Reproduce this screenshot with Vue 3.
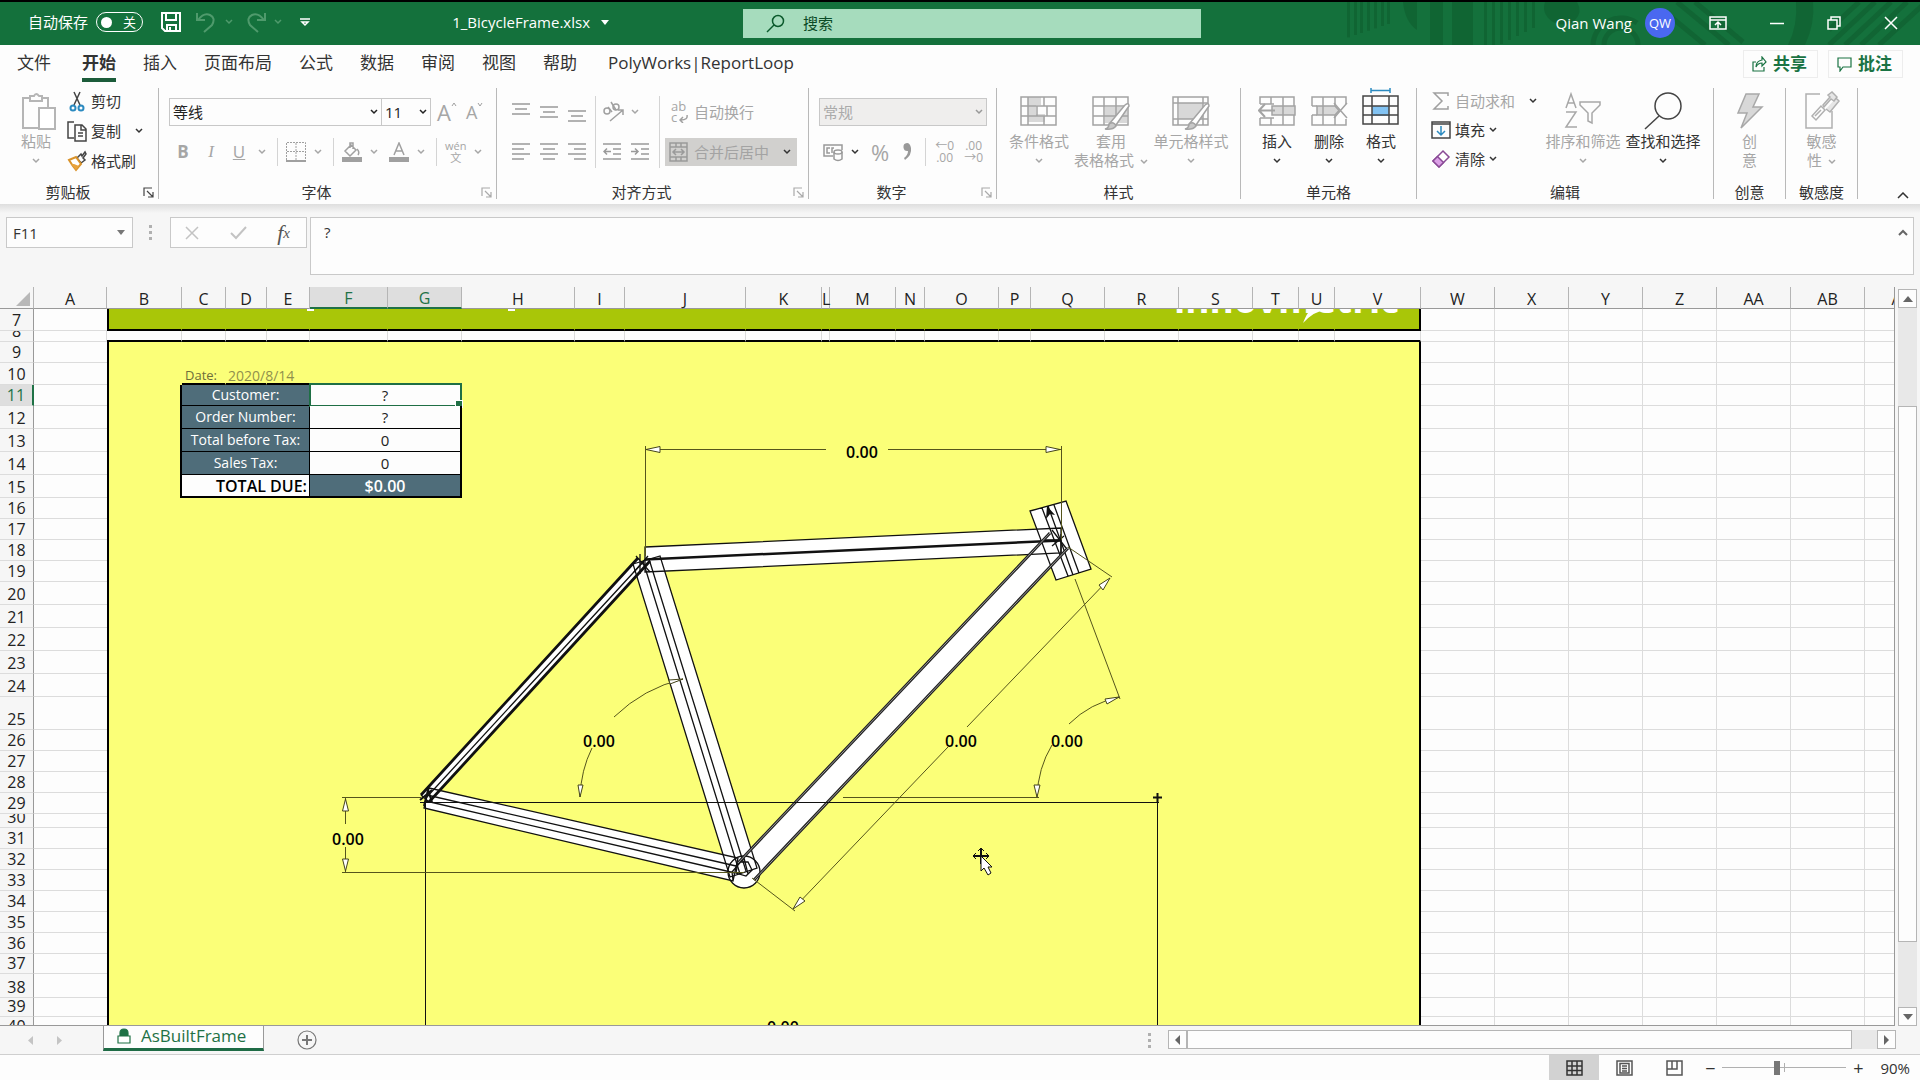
<template>
  <div class="excel">
    <header class="titlebar">
      <svg class="pattern" width="575" height="43" viewBox="0 2 575 43">
        <g fill="#0e5a2c" opacity="0.5">
          <rect v-for="x in [2, 9, 15, 22, 29, 36, 42]" :key="x" :x="x" y="2" width="3" :height="36 - x / 3" />
          <path d="M58 2h14v28q-12-8-14-28zM85 2h13v43H85zM107 2h21v43h-21z" />
          <rect v-for="x in [139, 147, 155, 163, 171, 179, 187]" :key="x" :x="x" y="2" width="3" :height="50 - (x - 139) / 2" />
          <path d="M200 2h32q6 10-2 18t-22 2q-12-8-8-20z" />
          <path d="M451 2h17q2 22-8 43h-17q10-20 8-43z" />
        </g>
        <g fill="none" stroke="#0e5a2c" stroke-width="5" opacity="0.5">
          <path d="M259 45a17 17 0 0 1 34 0M248 45a28 28 0 0 1 44-22M320 12l40 33M332 2l52 43M350 2l48 40" />
          <path d="M484 45l46-43M500 45l46-43M516 45l46-43M534 45l44-40M484 30l30-28" />
        </g>
      </svg>
      <div class="title-left">
        <span>自动保存</span>
        <button class="toggle"><i></i>关</button>
        <button><svg width="20" height="20" viewBox="0 0 20 20" fill="none" stroke="#fff" stroke-width="2"><path d="M1 1h18v18H4l-3-3zM5 1v7h10V1M6 19v-6h9v6M9 15v4" /></svg></button>
        <button class="undo"><svg width="19" height="22" viewBox="0 0 19 22" fill="none" stroke="#4f9a6c" stroke-width="2"><path d="M1 2v7h8M2 9q6-8 12-5t2 10l-8 7" /></svg></button>
        <Chevron class="dimc" />
        <button class="redo"><svg width="19" height="22" viewBox="0 0 19 22" fill="none" stroke="#4f9a6c" stroke-width="2"><path d="M18 2v7h-8M17 9q-6-8-12-5t-2 10l8 7" /></svg></button>
        <Chevron class="dimc" />
        <button class="more"><svg width="10" height="9" viewBox="0 0 10 9" fill="none" stroke="#fff" stroke-width="1.5"><path d="M0 1h10M2 4l3 3 3-3z" /></svg></button>
        <span class="filename">1_BicycleFrame.xlsx</span>
        <svg class="file-arrow" width="8" height="5"><path d="M0 0h8L4 5z" fill="#fff" /></svg>
      </div>
      <label class="search">
        <svg width="19" height="19" viewBox="0 0 19 19" fill="none" stroke="#0b5a2c" stroke-width="1.5"><circle cx="12" cy="7" r="5.5" /><path d="M8 11l-7 7" /></svg>
        <input v-model="keyword" placeholder="搜索" />
      </label>
      <div class="title-right">
        <span>Qian Wang</span>
        <span class="avatar">QW</span>
        <button class="win"><svg width="18" height="14" viewBox="0 0 18 14" fill="none" stroke="#fff" stroke-width="1.5"><path d="M1 1h16v12H1zM1 4h16M9 12V6M6 9l3-3 3 3" /></svg></button>
        <button class="win"><svg width="14" height="14"><path d="M0 7.5h14" stroke="#fff" stroke-width="1.5" /></svg></button>
        <button class="win"><svg width="14" height="14" viewBox="0 0 14 14" fill="none" stroke="#fff" stroke-width="1.5"><path d="M1 4h9v9H1zM4 4V1h9v9h-3" /></svg></button>
        <button class="win"><svg width="14" height="14" viewBox="0 0 14 14" stroke="#fff" stroke-width="1.5"><path d="M1 1l12 12M13 1L1 13" /></svg></button>
      </div>
    </header>

    <nav class="tabs">
      <button v-for="t in tabs" :key="t" class="tab" :class="{ on: t === activeTab, addin: t.length > 8 }" @click="activeTab = t">{{ t }}</button>
      <button class="share first"><svg width="15" height="16" viewBox="0 0 15 16" fill="none" stroke="#1a7343" stroke-width="1.2"><path d="M4 6H1v9h11v-4M4 11q0-6 6-7V1l4 5-4 4V7q-4 0-6 4z" /></svg>共享</button>
      <button class="share"><svg width="15" height="16" viewBox="0 0 15 16" fill="none" stroke="#1a7343" stroke-width="1.2"><path d="M1 2h13v9H6l-3 4v-4H1z" /></svg>批注</button>
    </nav>

    <section class="ribbon">
      <div class="group g-clip">
        <div class="body">
          <button class="big off paste">
            <span class="ico"><svg width="36" height="40" viewBox="0 0 36 40" fill="none" stroke="#b5b5b5" stroke-width="2"><path d="M18 37H2V7h7M20 7h7v9" /><path d="M9 10V5h4q2-4 5 0h3v5z" /><path d="M18 17h16v21H18z" fill="#fff" /></svg></span>
            <span>粘贴</span><Chevron />
          </button>
          <div class="list">
            <button><svg width="20" height="22" viewBox="0 0 20 22" fill="none"><path d="M7 2l6 13M13 2L7 15" stroke="#444" stroke-width="1.5" /><g stroke="#2b8ac0" stroke-width="2"><circle cx="6" cy="18" r="2.5" /><circle cx="14" cy="18" r="2.5" /></g></svg>剪切</button>
            <button><svg width="20" height="22" viewBox="0 0 20 22" fill="none" stroke="#444" stroke-width="1.5"><path d="M7 18H1V2h6M8 5h7l4 4v12H8zM14 5v5h5M11 13h5M11 16h5" /></svg>复制<Chevron class="far" /></button>
            <button><svg width="20" height="22" viewBox="0 0 20 22" fill="none" stroke-width="2"><path d="M10 8l4-4 1 2 3-4 1 2-3 4 2 2-4 3z" stroke="#444" stroke-width="1.5" /><path d="M2 10l7-3 5 7-5 6q-4-5-7-10z" stroke="#d9932b" fill="#fff" /><path d="M4 14l3 0 5 2-3 4z" fill="#e8a33d" /></svg>格式刷</button>
          </div>
        </div>
        <div class="caption launch">剪贴板<Launcher class="dark" /></div>
      </div>

      <div class="group g-font">
        <div class="body rows">
          <div class="row">
            <span class="pick font-name"><select aria-label="字体"><option>等线</option></select><Chevron /></span>
            <span class="pick font-size"><select aria-label="字号"><option>11</option></select><Chevron /></span>
            <button class="off grow">A<svg width="7" height="5"><path d="M1 4l2-3 2 3" fill="none" stroke="#a0a0a0" /></svg></button>
            <button class="off shrink">A<svg width="7" height="5"><path d="M1 1l2 3 2-3" fill="none" stroke="#a0a0a0" /></svg></button>
          </div>
          <div class="row off fmt">
            <button class="b">B</button><button class="i">I</button><button class="u">U</button><Chevron />
            <i class="sep"></i>
            <button><svg width="20" height="20" viewBox="0 0 20 20" fill="none" stroke="#a0a0a0"><path d="M.5 18V.5h19V18M10 1v18M1 9.5h18" stroke-dasharray="2 1" /><path d="M0 19h20" stroke-width="2" /></svg></button><Chevron />
            <i class="sep"></i>
            <button><svg width="20" height="20" viewBox="0 0 20 20" fill="none" stroke="#a0a0a0" stroke-width="1.5"><path d="M9 3l-6 6 5 5 6-6zM8 6V1h3v6M15 7q3 3 1 6" /><path d="M0 17.5h20" stroke-width="5" /></svg></button><Chevron />
            <button class="fcolor"><svg width="20" height="20" viewBox="0 0 20 20" fill="none" stroke="#a0a0a0" stroke-width="1.5"><path d="M5 13l5-12 5 12M7 9h6" /><path d="M0 17.5h20" stroke-width="5" /></svg></button><Chevron />
            <i class="sep"></i>
            <button class="wen"><span>wén</span><span>文</span></button><Chevron />
          </div>
        </div>
        <div class="caption launch">字体<Launcher /></div>
      </div>

      <div class="group g-align">
        <div class="body align-body">
          <div class="col">
            <div class="row off al">
              <button v-for="d in vAlign" :key="d"><svg width="18" height="22"><path :d="d" stroke="#999" stroke-width="1.5" /></svg></button>
            </div>
            <div class="row off al">
              <button v-for="d in hAlign" :key="d"><svg width="18" height="22"><path :d="d" stroke="#999" stroke-width="1.5" /></svg></button>
            </div>
          </div>
          <i class="vline"></i>
          <div class="col">
            <div class="row off al">
              <button><svg width="22" height="22" viewBox="0 0 22 22" fill="none" stroke="#a0a0a0" stroke-width="1.5"><circle cx="4" cy="10" r="3" /><path d="M5 6l4 5M8 1l5 8" /><circle cx="13" cy="6" r="3" /><path d="M7 20L20 9M15 9h5v5" /></svg></button><Chevron class="tight" />
            </div>
            <div class="row off al">
              <button><svg width="18" height="20" viewBox="0 0 18 20" fill="none" stroke="#999" stroke-width="1.5"><path d="M0 2h18M10 7h8M10 12h8M0 17h18M8 9.5H1M4 6.5l-3 3 3 3" /></svg></button>
              <button><svg width="18" height="20" viewBox="0 0 18 20" fill="none" stroke="#999" stroke-width="1.5"><path d="M0 2h18M10 7h8M10 12h8M0 17h18M0 9.5h7M4 6.5l3 3-3 3" /></svg></button>
            </div>
          </div>
          <i class="vline"></i>
          <div class="col">
            <button class="row off wrap"><span class="abc">ab<br />c<svg width="9" height="8" viewBox="0 0 9 8" fill="none" stroke="#a0a0a0" stroke-width="1.5"><path d="M8 0q1 5-6 5M4 2L1 5l3 3" /></svg></span>自动换行</button>
            <button class="row merge"><svg width="19" height="20" viewBox="0 0 19 20" fill="none" stroke="#9a9a9a" stroke-width="1.5"><path d="M1 1h17v18H1zM1 5h17M1 15h17M7 1v4M12 1v4M7 15v4M12 15v4M4 10h11M7 7l-3 3 3 3M12 7l3 3-3 3" /></svg><span>合并后居中</span><Chevron class="blk" /></button>
          </div>
        </div>
        <div class="caption launch">对齐方式<Launcher /></div>
      </div>

      <div class="group g-num">
        <div class="body rows">
          <div class="row"><span class="pick num"><select disabled aria-label="数字格式"><option>常规</option></select><Chevron /></span></div>
          <div class="row off numrow">
            <button><svg width="21" height="20" viewBox="0 0 21 20" fill="none" stroke="#999" stroke-width="1.5"><path d="M10 14H1V3h18v5M7 6H4v5h3M11 6H9v5" /><path d="M11 10v7q4 3 8 0v-7" /><ellipse cx="15" cy="10" rx="4" ry="2" /></svg></button><Chevron class="blk" />
            <button class="pct">%</button>
            <button><svg width="10" height="18" viewBox="0 0 10 18"><path d="M5 0a4 4 0 1 0 1 8q0 4-4 7l1 2q7-5 6-12Q8 0 5 0z" fill="#999" /></svg></button>
            <i class="sep"></i>
            <button class="dec">←0<br />.00</button>
            <button class="dec">.00<br />→0</button>
          </div>
        </div>
        <div class="caption launch">数字<Launcher /></div>
      </div>

      <div class="group g-style">
        <div class="body">
          <button class="big off">
            <span class="ico"><svg width="38" height="34" viewBox="0 0 38 34" fill="none" stroke="#a3a3a3" stroke-width="1.5"><path d="M8 3h13v8h-5v9h9v8H8z" fill="#d8d8d8" stroke="none" /><path d="M1 3h35v28H1zM8 3v28M1 12h35M1 22h35M17 12v10M24 3v9M27 12v10M24 22v9" /></svg></span>
            <span>条件格式</span><Chevron />
          </button>
          <button class="big off">
            <span class="ico"><svg width="38" height="38" viewBox="0 0 38 38" fill="none" stroke="#a3a3a3" stroke-width="1.5"><path d="M13 15h22v16H13z" fill="#d8d8d8" stroke="none" /><path d="M1 5h35v28H1zM1 14h35M1 24h35M12 5v28M24 5v28" /><path :d="brush" fill="#fff" /><path d="M13 37q4-1 4-5 5-3 7 2-3 4-11 3z" fill="#c8c8c8" /></svg></span>
            <span>套用</span><span>表格格式<Chevron class="inl" /></span>
          </button>
          <button class="big off wide">
            <span class="ico"><svg width="38" height="38" viewBox="0 0 38 38" fill="none" stroke="#a3a3a3" stroke-width="1.5"><path d="M7 11h24v16H7z" fill="#d8d8d8" stroke="none" /><path d="M1 5h35v28H1zM1 11h35M1 27h35M6 5v28M31 5v28" /><path :d="brush" fill="#fff" /><path d="M13 37q4-1 4-5 5-3 7 2-3 4-11 3z" fill="#c8c8c8" /></svg></span>
            <span>单元格样式</span><Chevron />
          </button>
        </div>
        <div class="caption">样式</div>
      </div>

      <div class="group g-cell">
        <div class="body">
          <button class="big">
            <span class="ico"><svg width="38" height="34" viewBox="0 0 38 34" fill="none" stroke="#a3a3a3" stroke-width="1.5"><path d="M14 12h23v9H14z" fill="#d8d8d8" /><path d="M2 10V3h34v9M2 24v7h34V21M13 3v7M25 3v9M13 24v7M25 21v10M2 10h14M2 24h14M25 12v9" /><path d="M1 16.5h16M7 10l-6 6.5 6 6.5" stroke-width="2" /></svg></span>
            <span>插入</span><Chevron />
          </button>
          <button class="big">
            <span class="ico"><svg width="38" height="34" viewBox="0 0 38 34" fill="none" stroke="#a3a3a3" stroke-width="1.5"><path d="M7 12h18l4 4.5-4 4.5H7z" fill="#d8d8d8" /><path d="M2 12V3h34v7M2 21v10h34v-6M13 3v9M25 3v9M13 12v9M13 21v10M25 21v10M2 12h5M2 21h5" /><path d="M24 9l13 15M37 9L24 24" /></svg></span>
            <span>删除</span><Chevron />
          </button>
          <button class="big">
            <span class="ico fmtico"><svg width="38" height="42" viewBox="0 0 38 42" fill="none" stroke="#444" stroke-width="1.5"><path d="M10 18h17v10H10z" fill="#82c3f3" stroke="none" /><path d="M1 8h35v28H1zM1 18h35M1 27h35M10 8v28M27 8v28" /><path d="M9 0v5M28 0v5M9 2.5h19" stroke="#2b8ac0" /></svg></span>
            <span>格式</span><Chevron />
          </button>
        </div>
        <div class="caption">单元格</div>
      </div>

      <div class="group g-edit">
        <div class="body">
          <div class="list">
            <button class="off"><svg width="20" height="20" viewBox="0 0 20 20" fill="none" stroke="#a0a0a0" stroke-width="1.5"><path d="M17 5V2H3l8 8-8 8h14v-3" /></svg>自动求和<Chevron class="blk far" /></button>
            <button><svg width="20" height="20" viewBox="0 0 20 20" fill="none" stroke="#444" stroke-width="1.5"><path d="M1 2h18v16H1zM1 4h18" /><path d="M10 6v9M6 11l4 4 4-4" stroke="#2b8ac0" /></svg>填充<Chevron /></button>
            <button><svg width="20" height="20" viewBox="0 0 20 20" fill="#fff" stroke="#8a4a96" stroke-width="1.5"><path d="M12 2l6 6-10 10-6-6z" /><path d="M6.5 7.5l6 6L8 18l-6-6z" fill="#dba0e6" /></svg>清除<Chevron /></button>
          </div>
          <button class="big off w80">
            <span class="ico"><svg width="38" height="40" viewBox="0 0 38 40" fill="none" stroke="#a8a8a8" stroke-width="1.5"><path d="M2 17L7 3l5 14M4 12h6M2 21h10L2 36h11M16 11h20v3l-8 8v10l-4-2v-8l-8-8z" /></svg></span>
            <span>排序和筛选</span><Chevron />
          </button>
          <button class="big w80">
            <span class="ico"><svg width="38" height="40" viewBox="0 0 38 40" fill="none" stroke="#444" stroke-width="1.5"><circle cx="24" cy="15" r="13" /><path d="M15 25L1 38" /></svg></span>
            <span>查找和选择</span><Chevron />
          </button>
        </div>
        <div class="caption">编辑</div>
      </div>

      <div class="group g-idea">
        <div class="body">
          <button class="big off">
            <span class="ico"><svg width="30" height="38" viewBox="0 0 30 38"><path d="M11 2h13l-6 13h9L6 36l6-15H3z" fill="#d8d8d8" stroke="#a8a8a8" stroke-width="1.5" /></svg></span>
            <span>创</span><span>意</span>
          </button>
        </div>
        <div class="caption">创意</div>
      </div>

      <div class="group g-idea">
        <div class="body">
          <button class="big off">
            <span class="ico"><svg width="36" height="40" viewBox="0 0 36 40" fill="none" stroke="#b0b0b0" stroke-width="1.5"><path d="M16 3H2v34h26V20" /><path d="M8 25l9-10 4 4-9 10zM11 25l6-6" /><path d="M19 14l7-8-2-2 4-3 5 5-3 4-3-2-7 8zM22 18l4 3 9-11-3-3" fill="#e6e6e6" /></svg></span>
            <span>敏感</span><span>性<Chevron class="inl" /></span>
          </button>
        </div>
        <div class="caption">敏感度</div>
      </div>
      <button class="collapse" aria-label="折叠功能区"><svg width="12" height="7"><path d="M1 6l5-5 5 5" fill="none" stroke="#333" stroke-width="1.5" /></svg></button>
    </section>

    <section class="formulabar">
      <label class="namebox"><input v-model="cellName" aria-label="名称框" /><svg width="8" height="5"><path d="M0 0h8L4 5z" fill="#777" /></svg></label>
      <svg class="dots" width="4" height="16"><path d="M0 0h3v3H0zM0 6h3v3H0zM0 12h3v3H0z" fill="#b0b0b0" /></svg>
      <div class="fx">
        <button><svg width="14" height="14"><path d="M1 1l12 12M13 1L1 13" stroke="#c3c3c3" stroke-width="1.5" /></svg></button>
        <button><svg width="17" height="14"><path d="M1 7l5 5L16 1" fill="none" stroke="#c3c3c3" stroke-width="2" /></svg></button>
        <button class="fn">f<sub>x</sub></button>
      </div>
      <div class="formula">
        <textarea v-model="formula" aria-label="编辑栏"></textarea>
        <button><svg width="10" height="7"><path d="M1 6l4-4 4 4" fill="none" stroke="#666" stroke-width="2" /></svg></button>
      </div>
    </section>

    <main class="sheet">
      <div class="grid">
        <table :style="{ width: tableWidth + 'px' }">
          <colgroup>
            <col class="c-head" />
            <col v-for="c in cols" :key="c.k" :style="{ width: c.w + 'px' }" />
          </colgroup>
          <thead>
            <tr>
              <th class="corner"><svg width="14" height="14"><path d="M14 0v14H0z" fill="#b8b8b8" /></svg></th>
              <th v-for="c in cols" :key="c.k" :class="{ picked: c.k === 'F' || c.k === 'G' }">{{ c.k }}</th>
            </tr>
          </thead>
          <tbody>
            <tr v-for="r in rows" :key="r.n" :style="{ height: r.h + 'px' }">
              <th :class="{ picked: r.n === 11, cut: r.n === 40 }"><div :style="{ height: r.h - 1 + 'px' }">{{ r.n }}</div></th>
              <td v-for="c in r.cells" :key="c.k" :colspan="c.span" :class="c.cls">{{ c.text }}<i v-if="c.sel" class="selection"></i></td>
            </tr>
          </tbody>
        </table>

        <svg class="drawing" width="1894" height="760" viewBox="0 309 1894 760">
          <!-- banner lettering, cut off by the column header -->
          <text x="1174" y="313" class="logo">innovmetric</text>
          <path d="M1303 323q4-10 8-14h17q-14 2-25 14z" fill="#fff" />
          <path d="M307 309h7v2h-7zM508 309h7v2h-7z" fill="#fff" />

          <g fill="#fff">
            <path d="M645 547L1061 528V553L645 572z" />
            <path d="M633 564L660 556L757 868L730 877z" />
            <path d="M429 788L738 858L733 881L424 808z" />
            <path d="M421 795L638 558L646 565L429 802z" />
            <path d="M737 864L1050 533L1068 549L754 881z" />
            <path d="M1030 511L1066 501L1091 569L1056 580z" />
            <circle cx="744" cy="872" r="16" />
          </g>

          <g fill="none" stroke="#111" stroke-width="1.3">
            <path d="M645 547L1061 528V553L645 572z" />
            <path d="M645 559.5L1061 540.5" stroke-width="2.5" />
            <path d="M633 564L660 556L757 868L730 877zM643 561L740 874M649 559L746 871" />
            <path d="M429 788L738 858L733 881L424 808zM427 795L736 866M426 801L735 873" />
            <path d="M421 795L638 558M429 802L650 561" stroke-width="2.8" />
            <path d="M425 799L644 561M421 795l8 7" />
            <path d="M1030 511L1066 501L1091 569L1056 580zM1042 508L1068 576M1048 506L1073 575M1054 505L1079 573" />
            <circle cx="744" cy="872" r="16" />
            <path d="M738 862h10l4 8-6 6-10-3zM733 880l-1-8 12-14 4 16" />
            <path d="M1045 540l16 0M1052 530l14 18M1061 534v22M1052 546l12-10" />
            <path d="M636 556l14 16M634 572l14-16M640 554v20" />
            <path d="M420 800l12-10M424 806l4-16 4 12" stroke-width="2" />
          </g>
          <path d="M1047 506l8 9-5-1-4 5z" fill="#111" />
          <g fill="none" stroke="#222" stroke-width="3">
            <path d="M738 863L1050 533M754 880L1068 548" />
          </g>
          <g fill="none" stroke="#999" stroke-width="1">
            <path d="M738 863L1050 533M754 880L1068 548" />
          </g>

          <path d="M420 802.5H1159M425.5 802V1069M1157.5 802V1069" fill="none" stroke="#111" stroke-width="1" />
          <path d="M1153 797.5h9M1157.5 793v9" stroke="#111" stroke-width="2" />

          <g fill="none" stroke="#55551c" stroke-width="1">
            <path d="M645.5 446V556M1061.5 446V540M645 449.5H826M888 449.5H1061" />
            <path d="M342 797.5H421M342 872.5H744M345.5 798V824M345.5 847V872" />
            <path d="M580 797Q581 770 592 748M614 717Q644 688 683 679" />
            <path d="M843 797.5H1039M1037 797Q1038 768 1052 745M1069 724Q1090 703 1120 697M1075 579L1120 699" />
            <path d="M1068 547L1112 577M1110 578L967 727M948 747L793 909M752 878L795 911" />
          </g>
          <g fill="#fff" stroke="#44441a" stroke-width="1">
            <path d="M646 449.5l14-3v6zM1060 449.5l-14-3v6zM345.5 799l-3 12h6zM345.5 871l-3-12h6z" />
            <path d="M580 797l-2-12h5zM683 679l-14 1 1 4zM1037 797l-3-12h6zM1119 697l-14 2 2 5z" />
            <path d="M1110 578l-11 7 4 5zM793 909l7-12 5 4z" />
          </g>

          <g class="dim">
            <text x="862" y="458">0.00</text>
            <text x="348" y="845">0.00</text>
            <text x="599" y="747">0.00</text>
            <text x="961" y="747">0.00</text>
            <text x="1067" y="747">0.00</text>
            <text x="783" y="1033">0.00</text>
          </g>

          <g stroke="#111" fill="none">
            <path d="M981 848v16M973 856h16" stroke-width="2" />
            <path d="M978 851l3-3 3 3M976 853l-3 3 3 3M986 853l3 3-3 3" />
            <path d="M981 856v15l3-3 4 7 3-2-3-6h4z" fill="#fff" />
          </g>
        </svg>
      </div>
      <div class="vscroll">
        <button><svg width="10" height="6"><path d="M0 6h10L5 0z" fill="#666" /></svg></button>
        <i class="track t1"></i><i class="thumb"></i><i class="track t2"></i>
        <button><svg width="10" height="6"><path d="M0 0h10L5 6z" fill="#666" /></svg></button>
      </div>
    </main>

    <footer class="sheettabs">
      <button class="nav"><svg width="5" height="9"><path d="M5 0v9L0 4.5z" fill="#c4c4c4" /></svg></button>
      <button class="nav"><svg width="5" height="9"><path d="M0 0v9l5-4.5z" fill="#c4c4c4" /></svg></button>
      <button class="sheettab"><svg width="14" height="17" viewBox="0 0 14 17" fill="none" stroke="#1e7145" stroke-width="1.2"><path d="M3 8V5q0-4 4-4t4 4v3z" fill="#1e7145" /><path d="M1 8h12v7H1z" fill="#fff" /></svg>AsBuiltFrame</button>
      <button class="add"><svg width="20" height="20" viewBox="0 0 20 20" fill="none" stroke="#777" stroke-width="1.2"><circle cx="10" cy="10" r="9" /><path d="M5 10h10M10 5v10" stroke-width="2" /></svg></button>
      <svg class="dots" width="4" height="16"><path d="M0 0h3v3H0zM0 6h3v3H0zM0 12h3v3H0z" fill="#b0b0b0" /></svg>
      <div class="hscroll">
        <button><svg width="5" height="10"><path d="M5 0v10L0 5z" fill="#666" /></svg></button>
        <i class="thumb"></i><i class="track"></i>
        <button><svg width="5" height="10"><path d="M0 0v10l5-5z" fill="#666" /></svg></button>
      </div>
    </footer>

    <footer class="status">
      <button class="view on"><svg width="17" height="16" viewBox="0 0 17 16" fill="none" stroke="#333" stroke-width="1.5"><path d="M1 1h15v14H1zM6 1v14M11 1v14M1 6h15M1 10.5h15" /></svg></button>
      <button class="view"><svg width="17" height="16" viewBox="0 0 17 16" fill="none" stroke="#555" stroke-width="1.5"><path d="M1 1h15v14H1zM4 3.5h9v9.5H4zM6 6h5M6 8.5h5M6 11h5" /></svg></button>
      <button class="view"><svg width="17" height="16" viewBox="0 0 17 16" fill="none" stroke="#555" stroke-width="1.5"><path d="M1 1h15v14H1zM1 9h10V1M6 1v8" /></svg></button>
      <button class="zoombtn">−</button>
      <input v-model="zoom" class="zoom" type="range" min="0" max="200" aria-label="缩放" />
      <button class="zoombtn">+</button>
      <span class="percent">90%</span>
    </footer>
  </div>
</template>

<script setup>
import { h, ref } from 'vue'

const Chevron = () => h('svg', { class: 'chev', width: 8, height: 6 }, [
  h('path', { d: 'M1 1l3 3 3-3', fill: 'none', stroke: 'currentColor', 'stroke-width': 1.5 }),
])
const Launcher = () => h('svg', { class: 'launcher', width: 11, height: 11 }, [
  h('path', { d: 'M1 9V1h8M4 4l6 6M10 5v5H5', fill: 'none', stroke: 'currentColor', 'stroke-width': 1.2 }),
])

const tabs = ['文件', '开始', '插入', '页面布局', '公式', '数据', '审阅', '视图', '帮助', 'PolyWorks|ReportLoop']
const activeTab = ref('开始')
const keyword = ref('')
const cellName = ref('F11')
const formula = ref('?')
const zoom = ref(88)

const vAlign = ['M0 3h18M3 8h12M0 13h18', 'M0 6h18M3 11h12M0 16h18', 'M0 10h18M3 15h12M0 20h18']
const hAlign = ['M0 3h18M0 8h12M0 13h18M0 18h12', 'M0 3h18M3 8h12M0 13h18M3 18h12', 'M0 3h18M6 8h12M0 13h18M6 18h12']
const brush = 'M18 31L33 13q4-3 4 1L24 33z'

const widths = {
  A: 73, B: 75, C: 44, D: 41, E: 43, F: 78, G: 74, H: 113, I: 50, J: 121, K: 76, L: 8, M: 66, N: 29, O: 74,
  P: 32, Q: 74, R: 74, S: 74, T: 46, U: 36, V: 86, W: 74, X: 74, Y: 74, Z: 74, AA: 74, AB: 74, AC: 74,
}
const cols = Object.keys(widths).map((k) => ({ k, w: widths[k] }))
const tableWidth = cols.reduce((sum, c) => sum + c.w, 34)

const form = {
  11: ['Customer:', '?'],
  12: ['Order Number:', '?'],
  13: ['Total before Tax:', '0'],
  14: ['Sales Tax:', '0'],
  15: ['TOTAL DUE:', '$0.00'],
}
// row heights from row 7 down
const heights = [
  22, 11, 21, 22, 21, 23, 23, 23, 23, 21, 21, 21, 21, 23, 23, 23, 23,
  23, 33, 21, 21, 21, 21, 14, 21, 21, 21, 21, 21, 21, 20, 24, 19, 21,
]

function makeCells(n) {
  const cells = []
  for (let i = 0; i < cols.length; i++) {
    const k = cols[i].k
    const inPaper = i >= 1 && i <= 21
    const cell = { k, span: 1, text: '', cls: [] }
    if (inPaper) cell.cls.push(n === 7 ? 'banner' : n === 8 ? 'gap' : 'paper')
    if (n !== 8 && k === 'A') cell.cls.push('open')
    if (n !== 8 && k === 'B') cell.cls.push('edge-left')
    if (n !== 8 && k === 'V') cell.cls.push('edge-right')
    if (n === 10 && k === 'C') {
      cell.text = 'Date:'
      cell.cls.push('date')
    }
    if (n === 10 && k === 'D') {
      cell.text = '2020/8/14'
      cell.cls.push('date', 'day')
    }
    if (n === 10 && k >= 'C' && k <= 'G' && k.length === 1) cell.cls.push('above-form')
    if (form[n] && k === 'B') cell.cls.push('before-form')
    if (form[n] && k === 'C') {
      cell.span = 3
      cell.text = form[n][0]
      cell.cls = ['label', n === 15 ? 'total-label' : '']
      i += 2
    }
    if (form[n] && k === 'F') {
      cell.span = 2
      cell.text = form[n][1]
      cell.cls = ['value', n === 15 ? 'total-value' : '']
      cell.sel = n === 11
      i += 1
    }
    cells.push(cell)
  }
  return cells
}
const rows = heights.map((hgt, i) => ({ n: i + 7, h: hgt, cells: makeCells(i + 7) }))
</script>

<style>
body {
  margin: 0;
}
</style>

<style scoped>
.excel {
  display: flex;
  flex-direction: column;
  height: 100vh;
  overflow: hidden;
  background: #fdfdfd;
  color: #333;
  font-family: "Open Sans", "Noto Sans CJK SC", sans-serif;
  font-size: 15px;
  line-height: 20px;
}
.excel * {
  box-sizing: border-box;
}
button, input, select, textarea {
  margin: 0;
  padding: 0;
  border: 0;
  background: none;
  color: inherit;
  font: inherit;
  outline: none;
}
button {
  display: flex;
  align-items: center;
  white-space: nowrap;
}
svg {
  flex: none;
  display: block;
}

/* title bar */
.titlebar {
  position: relative;
  display: grid;
  grid-template-columns: 743fr 458fr 719fr;
  align-items: center;
  height: 45px;
  padding-bottom: 1px;
  border-top: 2px solid #000;
  background: #14713c;
  color: #fff;
}
.pattern {
  position: absolute;
  right: 0;
  top: 0;
}
.title-left {
  display: flex;
  align-items: center;
  padding: 0 0 2px 28px;
}
.toggle {
  width: 47px;
  height: 20px;
  margin: 0 18px 0 8px;
  padding: 0 6px 0 4px;
  justify-content: space-between;
  border: 1px solid #fff;
  border-radius: 10px;
  font-size: 13px;
}
.toggle i {
  width: 11px;
  height: 11px;
  border-radius: 50%;
  background: #fff;
}
.undo {
  margin: 0 10px 0 15px;
}
.redo {
  margin: 0 8px 0 14px;
}
.dimc {
  color: #4f9a6c;
}
.more {
  margin-left: 18px;
}
.filename {
  margin-left: auto;
  margin-right: 11px;
}
.file-arrow {
  margin-right: 134px;
}
.search {
  display: flex;
  align-items: center;
  gap: 18px;
  height: 29px;
  padding-left: 23px;
  background: #a6dcbd;
}
.search input {
  flex: 1;
}
.search input::placeholder {
  color: #0b4a26;
  opacity: 1;
}
.title-right {
  position: relative;
  display: flex;
  align-items: center;
  justify-content: flex-end;
  padding-right: 22px;
}
.avatar {
  width: 30px;
  height: 30px;
  margin: 0 34px 0 13px;
  border-radius: 50%;
  background: #4a68f0;
  font-size: 13px;
  line-height: 30px;
  text-align: center;
}
.win + .win {
  margin-left: 43px;
}

/* ribbon tabs */
.tabs {
  display: flex;
  align-items: flex-start;
  height: 40px;
  padding: 5px 17px 0 17px;
  font-size: 17px;
}
.tab {
  height: 32px;
  margin-right: 27px;
  padding-bottom: 2px;
  border-bottom: 4px solid transparent;
}
.tab:first-child {
  margin-right: 31px;
}
.tab.on {
  border-bottom-color: #1c5c3a;
  font-weight: 700;
}
.tab.addin {
  margin-right: auto;
  margin-left: 4px;
}
.share {
  gap: 6px;
  height: 28px;
  padding: 0 10px 0 8px;
  border: 1px solid #ededed;
  color: #1a7343;
  font-weight: 700;
}
.share.first {
  margin-right: 10px;
}

/* ribbon */
.ribbon {
  display: flex;
  height: 119px;
  padding: 3px 11px 5px 0;
}
.group {
  display: flex;
  flex-direction: column;
  flex: none;
  border-right: 1px solid #b9b9b9;
}
.g-clip { width: 159px; }
.g-font { width: 338px; }
.g-align { width: 312px; }
.g-num { width: 188px; }
.g-style { width: 244px; }
.g-cell { width: 176px; }
.g-edit { width: 297px; }
.g-idea { width: 72px; }
.body {
  display: flex;
  height: 97px;
}
.caption {
  position: relative;
  height: 14px;
  line-height: 14px;
  text-align: center;
}
.caption.launch {
  padding-right: 22px;
}
.launcher {
  position: absolute;
  right: 4px;
  top: 2px;
  color: #aaa;
}
.launcher.dark {
  color: #444;
}
.off {
  color: #a6a6a6;
}
.blk {
  color: #333;
}
.big {
  flex-direction: column;
  padding-top: 2px;
  line-height: 19px;
}
.big .ico {
  display: flex;
  align-items: center;
  justify-content: center;
  height: 42px;
}
.big > .chev {
  margin-top: 7px;
}
.inl {
  display: inline-block;
  margin-left: 6px;
  vertical-align: middle;
}
.paste {
  width: 30px;
  margin-left: 21px;
}
.paste svg {
  margin-left: 6px;
}
.paste .chev {
  margin-left: 0;
}
.list {
  display: flex;
  flex-direction: column;
  margin-top: -2px;
}
.g-clip .list {
  margin-left: 16px;
}
.list button {
  height: 30px;
  gap: 4px;
}
.g-edit .list {
  width: 126px;
  padding-left: 14px;
}
.g-edit .list button {
  height: 29px;
}
.far {
  margin-left: 10px;
}
.rows, .col {
  display: flex;
  flex-direction: column;
  gap: 12px;
  padding-top: 10px;
}
.row {
  display: flex;
  align-items: center;
  height: 28px;
}
.g-font .rows, .g-num .rows {
  padding-left: 10px;
}
.pick {
  position: relative;
  display: flex;
  align-items: center;
  height: 28px;
  border: 1px solid #c8c8c8;
  color: #222;
}
.pick select {
  width: 100%;
  height: 100%;
  padding-left: 3px;
  appearance: none;
}
.pick .chev {
  position: absolute;
  right: 3px;
  pointer-events: none;
}
.font-name { width: 213px; }
.font-size {
  width: 49px;
  border-left: 0;
}
.grow, .shrink {
  align-items: flex-start;
  font-size: 22px;
}
.grow { margin-left: 6px; }
.shrink {
  margin-left: 8px;
  font-size: 18px;
}
.fmt {
  padding-left: 8px;
}
.fmt button {
  justify-content: center;
}
.fmt .b, .fmt .i, .fmt .u {
  width: 28px;
  font-size: 17px;
}
.fmt .b {
  width: 12px;
  margin-right: 8px;
  font-weight: 700;
}
.fmt .i {
  font-family: "Liberation Serif", serif;
  font-style: italic;
}
.fmt .u {
  text-decoration: underline;
}
.fmt .u + .chev {
  margin-left: 5px;
}
.fmt .chev {
  margin-left: 8px;
}
.fcolor {
  margin-left: 11px;
}
.sep {
  width: 1px;
  height: 28px;
  margin: 0 8px 0 11px;
  background: #d4d4d4;
}
.wen {
  flex-direction: column;
  font-size: 11px;
  line-height: 12px;
}
.align-body {
  padding-left: 15px;
}
.al {
  gap: 10px;
}
.tight {
  margin-left: -4px;
}
.vline {
  width: 1px;
  height: 72px;
  margin: 8px 7px 0 9px;
  background: #d4d4d4;
}
.vline:last-of-type {
  margin: 8px 5px 0 10px;
}
.wrap {
  gap: 5px;
  padding-left: 6px;
}
.abc {
  position: relative;
  width: 18px;
  font-size: 13px;
  line-height: 11px;
  text-align: left;
}
.abc svg {
  position: absolute;
  left: 8px;
  bottom: 0;
}
.merge {
  width: 132px;
  gap: 6px;
  padding-left: 4px;
  background: #d1d0ce;
  color: #a3a3a3;
}
.merge .chev {
  margin-left: 8px;
}
.num {
  width: 168px;
  background: #efeeed;
  color: #aaa;
}
.num select {
  opacity: 1;
}
.num .chev {
  color: #999;
}
.numrow {
  gap: 7px;
  padding-left: 4px;
}
.pct {
  margin-left: 5px;
  margin-right: 6px;
  font-size: 22px;
}
.numrow .sep {
  margin: 0 2px 0 6px;
}
.dec {
  width: 22px;
  font-size: 12px;
  line-height: 12px;
}
.g-style .body {
  padding-left: 8px;
}
.g-style .big {
  width: 68px;
}
.g-style .big + .big {
  width: 76px;
}
.g-style .big.wide {
  width: 84px;
}
.g-cell .body {
  padding-left: 10px;
}
.g-cell .big {
  width: 52px;
}
.fmtico svg {
  margin-bottom: 4px;
}
.g-edit .w80 {
  width: 80px;
}
.g-idea .big {
  width: 100%;
}
.collapse {
  margin-left: auto;
  align-self: flex-end;
}

/* formula bar */
.formulabar {
  display: flex;
  align-items: flex-start;
  height: 83px;
  padding: 13px 6px 0 6px;
  background: linear-gradient(#dedede, #f6f6f6 9px);
}
.namebox {
  display: flex;
  align-items: center;
  width: 127px;
  height: 31px;
  padding: 0 7px 0 6px;
  border: 1px solid #c9c9c9;
  background: #fdfdfd;
}
.namebox input {
  flex: 1;
  min-width: 0;
}
.formulabar .dots {
  margin: 8px 17px 0 16px;
}
.fx {
  display: flex;
  align-items: center;
  justify-content: space-between;
  width: 137px;
  height: 31px;
  margin-right: 3px;
  padding: 0 16px 0 14px;
  border: 1px solid #c9c9c9;
  background: #fdfdfd;
}
.fn {
  color: #555;
  font-family: "Liberation Serif", serif;
  font-size: 22px;
  font-style: italic;
}
.fn sub {
  font-size: 15px;
}
.formula {
  display: flex;
  flex: 1;
  height: 58px;
  border: 1px solid #c9c9c9;
  background: #fdfdfd;
}
.formula textarea {
  flex: 1;
  padding: 4px 13px;
  resize: none;
}
.formula button {
  align-self: flex-start;
  padding: 11px 5px 0 0;
}

/* worksheet */
.sheet {
  display: flex;
  flex: 1;
  min-height: 0;
  background: #f6f6f6;
}
.grid {
  position: relative;
  flex: 1;
  min-width: 0;
  overflow: hidden;
  border-right: 1px solid #999;
  border-bottom: 1px solid #999;
  background: #fdfdfd;
}
table {
  table-layout: fixed;
  border-spacing: 0;
}
.c-head {
  width: 34px;
}
th, td {
  padding: 0;
  border-right: 1px solid #dcdcdc;
  border-bottom: 1px solid #dcdcdc;
  white-space: nowrap;
  line-height: 18px;
}
th {
  background: #f6f6f6;
  color: #222;
  font-size: 16px;
  font-weight: 400;
}
thead th {
  height: 22px;
  padding-top: 2px;
  border-right-color: #b5b5b5;
  border-bottom-color: #999;
}
thead th.picked {
  border-bottom: 2px solid #1f7246;
  background: #dedede;
  color: #1f7246;
}
.corner svg {
  margin: 0 3px 0 auto;
}
tbody th {
  border-right-color: #999;
}
tbody th div {
  display: flex;
  align-items: flex-end;
  justify-content: center;
  overflow: hidden;
  padding-bottom: 1px;
}
tbody th.cut div {
  align-items: flex-start;
}
tbody th.picked {
  border-right: 2px solid #1f7246;
  background: #dedede;
  color: #1f7246;
}
.banner {
  border-right-color: #a9c608;
  border-bottom: 2px solid #000;
  background: #a9c608;
}
.gap {
  border-bottom: 2px solid #000;
}
.paper {
  border-right-color: #fbff78;
  border-bottom: 0;
  background: #fbff78;
}
.open {
  border-right: 0;
}
.edge-left {
  border-left: 2px solid #000;
}
.edge-right {
  border-right: 2px solid #000;
}
.date {
  padding-left: 3px;
  color: #6e6e3a;
  font-size: 13px;
  line-height: 15px;
  vertical-align: bottom;
}
.day {
  padding-left: 2px;
  color: #90904c;
  font-size: 14px;
}
.above-form {
  border-bottom: 2px solid #000;
}
.before-form {
  border-right: 2px solid #000;
}
.label {
  border-right: 1px solid #000;
  border-bottom: 1px solid #000;
  background: #4f6d7a;
  color: #fff;
  font-size: 14px;
  text-align: center;
}
.value {
  position: relative;
  border-right: 2px solid #000;
  border-bottom: 1px solid #000;
  background: #fdfdfd;
  color: #222;
  text-align: center;
}
.total-label {
  padding-right: 2px;
  border-bottom: 2px solid #000;
  background: #fdfdfd;
  color: #000;
  font-size: 16px;
  font-weight: 600;
  text-align: right;
}
.total-value {
  border-bottom: 2px solid #000;
  background: #4f6d7a;
  color: #fff;
  font-size: 16px;
  font-weight: 600;
}
.selection {
  position: absolute;
  inset: -2px -2px -2px -1px;
  border: 2px solid #1f6f45;
}
.selection::after {
  content: "";
  position: absolute;
  right: -3px;
  bottom: -3px;
  width: 6px;
  height: 6px;
  border: 1px solid #fff;
  background: #1f6f45;
}
.drawing {
  position: absolute;
  left: 0;
  top: 22px;
}
.logo {
  fill: #fff;
  font-size: 37px;
  font-weight: 700;
}
.dim text {
  fill: #000;
  font-size: 16px;
  font-weight: 600;
  text-anchor: middle;
}

/* scroll bars */
.vscroll {
  display: flex;
  flex-direction: column;
  width: 25px;
  padding: 2px 3px 0 3px;
}
.vscroll button, .hscroll button {
  flex: none;
  justify-content: center;
  width: 19px;
  height: 19px;
  border: 1px solid #b5b5b5;
  background: #fdfdfd;
}
.track {
  background: #e8e8e8;
}
.thumb {
  border: 1px solid #b5b5b5;
  background: #fdfdfd;
}
.t1 { flex: 98; }
.vscroll .thumb { flex: 536; }
.t2 { flex: 65; }
.sheettabs {
  display: flex;
  align-items: flex-start;
  height: 29px;
  padding-right: 24px;
  border-bottom: 1px solid #cfcfcf;
  background: #f6f6f6;
}
.nav {
  height: 28px;
  margin-left: 28px;
}
.nav + .nav {
  margin-left: 24px;
}
.sheettab {
  gap: 10px;
  height: 25px;
  margin: 0 33px 0 41px;
  padding: 0 17px 2px 13px;
  border: 1px solid #999;
  border-top: 0;
  border-bottom: 3px solid #1e6b45;
  background: #fdfdfd;
  color: #1e7145;
  font-size: 17px;
}
.add {
  height: 28px;
}
.sheettabs .dots {
  margin: 7px 16px 0 auto;
}
.hscroll {
  display: flex;
  width: 728px;
  height: 19px;
  margin-top: 4px;
}
.hscroll .thumb { flex: 665; }
.hscroll .track { flex: 25; }

/* status bar */
.status {
  display: flex;
  align-items: center;
  justify-content: flex-end;
  height: 25px;
  padding-right: 10px;
}
.view {
  justify-content: center;
  width: 50px;
  height: 25px;
}
.view.on {
  background: #d2d2d2;
}
.zoombtn {
  width: 12px;
  justify-content: center;
  font-size: 18px;
}
.view + .zoombtn {
  margin-left: 5px;
}
.zoom {
  width: 124px;
  height: 16px;
  margin: 0 6px;
  appearance: none;
  background: linear-gradient(#b0b0b0, #b0b0b0) center / 100% 1px no-repeat, linear-gradient(#b0b0b0, #b0b0b0) center / 1px 9px no-repeat;
}
.zoom::-webkit-slider-thumb {
  width: 6px;
  height: 14px;
  appearance: none;
  background: #777;
}
.percent {
  margin-left: 16px;
}
</style>
